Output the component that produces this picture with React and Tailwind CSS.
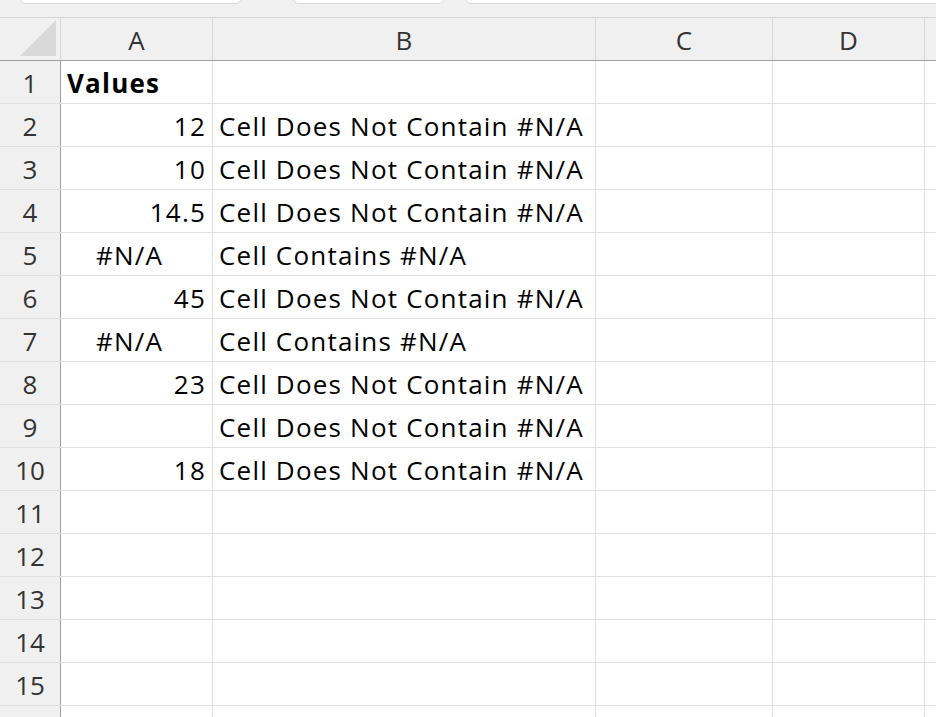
const cols = [
  { l: "A", w: 152 },
  { l: "B", w: 383 },
  { l: "C", w: 177 },
  { l: "D", w: 152 },
  { l: "", w: 60 },
]

const data = [
  ["Values", ""],
  ["12", "Cell Does Not Contain #N/A"],
  ["10", "Cell Does Not Contain #N/A"],
  ["14.5", "Cell Does Not Contain #N/A"],
  ["#N/A", "Cell Contains #N/A"],
  ["45", "Cell Does Not Contain #N/A"],
  ["#N/A", "Cell Contains #N/A"],
  ["23", "Cell Does Not Contain #N/A"],
  ["", "Cell Does Not Contain #N/A"],
  ["18", "Cell Does Not Contain #N/A"],
  ["", ""], ["", ""], ["", ""], ["", ""], ["", ""], ["", ""],
]

export default function App() {
  return (
    <div className="w-[936px] h-[717px] overflow-hidden bg-white text-black" style={{ fontFamily: '"Open Sans", "Noto Sans", sans-serif' }}>
      {/* tab strip */}
      <div className="h-[18px] bg-[#f0f0f0] relative overflow-hidden border-b border-[#d4d4d4]">
        <div className="absolute left-[20px] top-[-10px] w-[222px] h-[14px] bg-white border border-[#d8d8d8] rounded-md" />
        <div className="absolute left-[293px] top-[-10px] w-[152px] h-[14px] bg-white border border-[#d8d8d8] rounded-md" />
        <div className="absolute left-[465px] top-[-10px] w-[500px] h-[14px] bg-white border border-[#d8d8d8] rounded-md" />
      </div>
      {/* column headers */}
      <div className="flex h-[43px] bg-[#f0f0f0] border-b border-[#a0a0a0]">
        <div className="w-[61px] shrink-0 relative border-r border-[#d4d4d4]">
          <div className="absolute right-[4px] bottom-[4px] w-0 h-0 border-l-[36px] border-l-transparent border-b-[36px] border-b-[#d9d9d9]" />
        </div>
        {cols.map((c, i) => (
          <div key={i} style={{ width: c.w }} className="shrink-0 border-r border-[#d4d4d4] flex items-center justify-center pt-[2px] text-[26px] text-[#333]">
            {c.l}
          </div>
        ))}
      </div>
      {data.map((r, i) => (
        <div key={i} className="flex h-[43px] border-b border-[#e1e1e1]">
          <div className="w-[61px] shrink-0 bg-[#f0f0f0] border-r border-[#a0a0a0] flex items-center justify-center pt-[3px] text-[26px] text-[#333]">
            {i < 15 ? i + 1 : ""}
          </div>
          <div
            className={`w-[152px] shrink-0 border-r border-[#e1e1e1] flex items-center pt-[3px] px-[6px] text-[26px] tracking-[1.2px] ${
              i === 0 ? "font-bold justify-start tracking-[0.5px]" : r[0] === "#N/A" ? "justify-center pr-[20px]" : "justify-end"
            }`}
          >
            {r[0]}
          </div>
          <div className="w-[383px] shrink-0 border-r border-[#e1e1e1] flex items-center pt-[3px] px-[6px] text-[26px] tracking-[1.2px] whitespace-nowrap">
            {r[1]}
          </div>
          <div className="w-[177px] shrink-0 border-r border-[#e1e1e1]" />
          <div className="w-[152px] shrink-0 border-r border-[#e1e1e1]" />
          <div className="w-[60px] shrink-0" />
        </div>
      ))}
    </div>
  )
}
